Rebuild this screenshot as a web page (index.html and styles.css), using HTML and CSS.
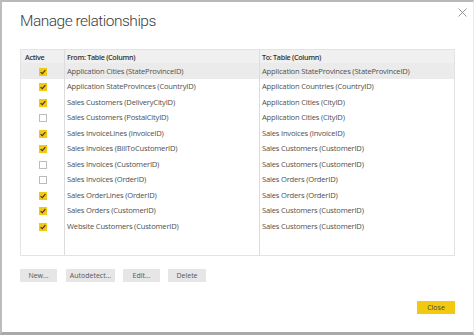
FILE: index.html
```html
<!DOCTYPE html>
<html lang="en">
<head>
  <meta charset="UTF-8" />
  <meta name="viewport" content="width=device-width, initial-scale=1.0" />
  <title>Manage relationships</title>
  <link rel="stylesheet" href="styles.css">
</head>
<body>
  <div class="dialog">
    <button class="close-x" aria-label="Close">
      <svg width="9" height="9" viewBox="0 0 9 9"><path d="M0.5 0.5 L8.5 8.5 M8.5 0.5 L0.5 8.5" stroke="#888" stroke-width="0.9" fill="none"/></svg>
    </button>
    <h1>Manage relationships</h1>

    <div class="grid-box">
      <table class="rels">
        <thead>
          <tr>
            <th class="col-active">Active</th>
            <th class="col-from">From: Table (Column)</th>
            <th class="col-to">To: Table (Column)</th>
          </tr>
        </thead>
        <tbody id="rows"></tbody>
      </table>
    </div>

    <div class="actions">
      <button class="btn">New...</button>
      <button class="btn">Autodetect...</button>
      <button class="btn">Edit...</button>
      <button class="btn">Delete</button>
    </div>

    <div class="footer">
      <button class="btn btn-close">Close</button>
    </div>
  </div>

  <script>
    const relaciones = [
      [true, 'Application Cities (StateProvinceID)', 'Application StateProvinces (StateProvinceID)'],
      [true, 'Application StateProvinces (CountryID)', 'Application Countries (CountryID)'],
      [true, 'Sales Customers (DeliveryCityID)', 'Application Cities (CityID)'],
      [false, 'Sales Customers (PostalCityID)', 'Application Cities (CityID)'],
      [true, 'Sales InvoiceLines (InvoiceID)', 'Sales Invoices (InvoiceID)'],
      [true, 'Sales Invoices (BillToCustomerID)', 'Sales Customers (CustomerID)'],
      [false, 'Sales Invoices (CustomerID)', 'Sales Customers (CustomerID)'],
      [false, 'Sales Invoices (OrderID)', 'Sales Orders (OrderID)'],
      [true, 'Sales OrderLines (OrderID)', 'Sales Orders (OrderID)'],
      [true, 'Sales Orders (CustomerID)', 'Sales Customers (CustomerID)'],
      [true, 'Website Customers (CustomerID)', 'Sales Customers (CustomerID)']
    ];

    const check = '<svg width="8" height="8" viewBox="0 0 8 8"><path d="M1.6 4.1 L3.3 5.7 L6.4 2.2" stroke="#3a3a3a" stroke-width="1.2" fill="none"/></svg>';
    const tbody = document.getElementById('rows');

    relaciones.forEach(([activo, desde, hasta], i) => {
      const tr = document.createElement('tr');
      if (i === 0) tr.className = 'selected';
      tr.innerHTML = `
        <td class="col-active"><span class="box ${activo ? 'on' : ''}">${activo ? check : ''}</span></td>
        <td>${desde}</td>
        <td>${hasta}</td>`;
      tbody.appendChild(tr);
    });

    const relleno = document.createElement('tr');
    relleno.className = 'filler';
    relleno.innerHTML = '<td></td><td></td><td></td>';
    tbody.appendChild(relleno);
  </script>
</body>
</html>
```

FILE: styles.css
```css
html, body {
  margin: 0;
  padding: 0;
  background: #fff;
}
body {
  font-family: "Open Sans", "Noto Sans", sans-serif;
  color: #444;
}
.dialog {
  position: relative;
  box-sizing: border-box;
  width: 474px;
  height: 335px;
  border-top: 2px solid #b9b9b9;
  border-left: 2px solid #bdbdbd;
  border-bottom: 3px solid #a9a9a9;
  border-right: 1px solid #ececec;
  padding: 0 18px 0 18px;
}
.close-x {
  position: absolute;
  top: 6px;
  right: 6px;
  border: none;
  background: none;
  padding: 0;
  line-height: 0;
}
h1 {
  margin: 0;
  padding-top: 10px;
  height: 38px;
  box-sizing: border-box;
  font-family: Roboto, "Open Sans", sans-serif;
  font-size: 15.5px;
  font-weight: 300;
  color: #3c3c3c;
  letter-spacing: -0.5px;
}
.grid-box {
  margin-top: 9px;
  width: 435px;
  height: 207px;
  box-sizing: border-box;
  border: 1px solid #e3e3e3;
}
.rels {
  width: 100%;
  height: 100%;
  border-collapse: collapse;
  table-layout: fixed;
  font-size: 7.6px;
  letter-spacing: -0.2px;
}
.rels th {
  height: 13px;
  padding: 0 0 0 2px;
  text-align: left;
  font-size: 7.2px;
  font-weight: 600;
  letter-spacing: -0.3px;
  color: #333;
  background: #f0f0f0;
}
.rels td {
  height: 15.5px;
  padding: 0 0 0 2px;
  color: #505050;
  white-space: nowrap;
}
.rels th + th,
.rels td + td {
  border-left: 1px solid #dcdcdc;
}
.rels .col-active {
  width: 39px;
  padding-left: 4px;
}
.rels td.col-active {
  text-align: center;
  padding: 0;
}
.rels .col-from {
  width: 192px;
}
.rels tr.selected td {
  background: #ebebeb;
}
.rels tr.filler td {
  height: auto;
}
.box {
  display: inline-block;
  box-sizing: border-box;
  width: 8px;
  height: 8px;
  border: 1px solid #bcbcbc;
  background: #fff;
  vertical-align: middle;
  line-height: 0;
}
.box.on {
  border: none;
  background: #f2c811;
}
.actions {
  display: flex;
  gap: 8px;
  margin-top: 13px;
}
.btn {
  height: 13px;
  padding: 0;
  border: none;
  background: #e6e6e6;
  font-family: inherit;
  font-size: 7px;
  color: #555;
  line-height: 13px;
}
.actions .btn:nth-child(1) { width: 37px; }
.actions .btn:nth-child(2) { width: 49px; margin-left: 1px; }
.actions .btn:nth-child(3) { width: 37px; }
.actions .btn:nth-child(4) { width: 38px; }
.footer {
  display: flex;
  justify-content: flex-end;
  margin-top: 19px;
}
.btn-close {
  width: 38px;
  background: #f2c811;
  color: #444;
}
```
